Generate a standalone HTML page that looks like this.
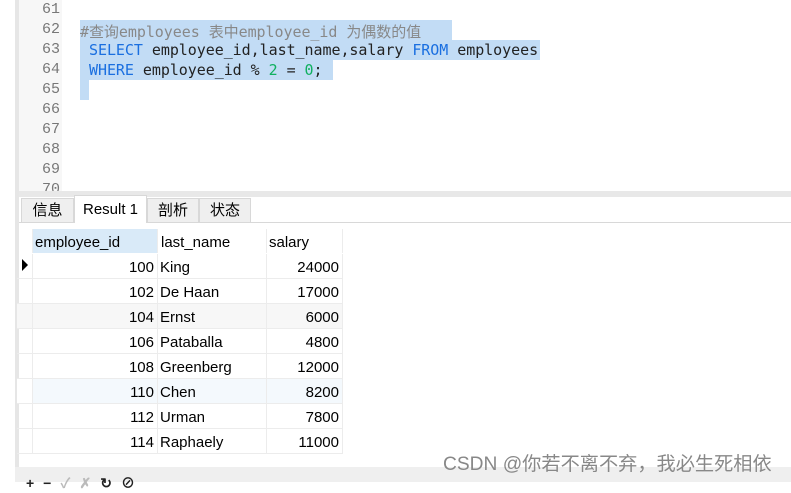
<!DOCTYPE html><html><head><meta charset="utf-8"><style>
body{margin:0;width:791px;height:482px;overflow:hidden;background:#fff;position:relative;font-family:"Liberation Sans","Noto Sans CJK SC",sans-serif}
.abs{position:absolute}
.ln{position:absolute;left:19px;width:43px;text-align:right;box-sizing:border-box;padding-right:2px;font:15px "Liberation Mono","Noto Sans CJK SC",monospace;color:#777}
.code{position:absolute;font:15px "DejaVu Sans Mono","Noto Sans CJK SC",monospace;color:#222;white-space:pre;letter-spacing:-0.05px}
.kw{color:#1a6fe0}.num{color:#10b060}.cm{color:#888}
.sel{position:absolute;background:#c2dcf5}
.tab{position:absolute;top:198px;height:24px;background:#efefef;border:1px solid #d8d8d8;border-bottom:none;font-size:15px;line-height:24px;text-align:center;box-sizing:border-box}
.row{position:absolute;left:17px;width:326px;height:25px;border-bottom:1px solid #ececec;box-sizing:border-box;font-size:15px;line-height:27px}
.row div{position:absolute;top:0;height:24px;border-right:1px solid #ececec;box-sizing:border-box}
</style></head><body>
<div class="abs" style="left:15px;top:0;width:4px;height:470px;background:#e6e6e6"></div>
<div class="abs" style="left:19px;top:0;width:43px;height:192px;background:#f7f7f7"></div>
<div class="sel" style="left:80px;top:20px;width:372px;height:20px"></div>
<div class="sel" style="left:80px;top:40px;width:460px;height:20px"></div>
<div class="sel" style="left:80px;top:60px;width:253px;height:20px"></div>
<div class="sel" style="left:80px;top:80px;width:9px;height:20px"></div>
<div class="ln" style="top:1px">61</div><div class="ln" style="top:21px">62</div><div class="ln" style="top:41px">63</div><div class="ln" style="top:61px">64</div><div class="ln" style="top:81px">65</div><div class="ln" style="top:101px">66</div><div class="ln" style="top:121px">67</div><div class="ln" style="top:141px">68</div><div class="ln" style="top:161px">69</div><div class="ln" style="top:181px;height:10px;overflow:hidden">70</div>
<div class="code cm" style="left:80px;top:21px">#查询employees 表中employee_id 为偶数的值</div>
<div class="code" style="left:80px;top:41px"> <span class="kw">SELECT</span> employee_id,last_name,salary <span class="kw">FROM</span> employees</div>
<div class="code" style="left:80px;top:61px"> <span class="kw">WHERE</span> employee_id % <span class="num">2</span> = <span class="num">0</span>;</div>
<div class="abs" style="left:19px;top:191px;width:772px;height:6px;background:#e8e8e8"></div>
<div class="abs" style="left:19px;top:222px;width:772px;height:1px;background:#d8d8d8"></div>
<div class="tab" style="left:21px;width:53px">信息</div>
<div class="tab" style="left:74px;top:195px;height:28px;width:73px;background:#fff;line-height:27px">Result 1</div>
<div class="tab" style="left:147px;width:52px">剖析</div>
<div class="tab" style="left:199px;width:52px">状态</div>
<div class="row" style="top:229px;border-bottom:none"><div style="left:0;width:16px"></div><div style="left:16px;width:125px;background:#d9eaf8;padding-left:2px">employee_id</div><div style="left:141px;width:109px;padding-left:3px">last_name</div><div style="left:250px;width:76px;padding-left:2px">salary</div></div>
<div class="abs" style="left:22px;top:259px;width:0;height:0;border-left:6px solid #000;border-top:6px solid transparent;border-bottom:6px solid transparent"></div>
<div class="row" style="top:254px"><div style="left:0;width:16px"></div><div style="left:16px;width:125px;text-align:right;padding-right:3px">100</div><div style="left:141px;width:109px;padding-left:2px">King</div><div style="left:250px;width:76px;text-align:right;padding-right:3px">24000</div></div>
<div class="row" style="top:279px"><div style="left:0;width:16px"></div><div style="left:16px;width:125px;text-align:right;padding-right:3px">102</div><div style="left:141px;width:109px;padding-left:2px">De Haan</div><div style="left:250px;width:76px;text-align:right;padding-right:3px">17000</div></div>
<div class="row" style="top:304px;background:#f7f7f7"><div style="left:0;width:16px"></div><div style="left:16px;width:125px;text-align:right;padding-right:3px">104</div><div style="left:141px;width:109px;padding-left:2px">Ernst</div><div style="left:250px;width:76px;text-align:right;padding-right:3px">6000</div></div>
<div class="row" style="top:329px"><div style="left:0;width:16px"></div><div style="left:16px;width:125px;text-align:right;padding-right:3px">106</div><div style="left:141px;width:109px;padding-left:2px">Pataballa</div><div style="left:250px;width:76px;text-align:right;padding-right:3px">4800</div></div>
<div class="row" style="top:354px"><div style="left:0;width:16px"></div><div style="left:16px;width:125px;text-align:right;padding-right:3px">108</div><div style="left:141px;width:109px;padding-left:2px">Greenberg</div><div style="left:250px;width:76px;text-align:right;padding-right:3px">12000</div></div>
<div class="row" style="top:379px;background:#f4f9fd"><div style="left:0;width:16px;background:#fff"></div><div style="left:16px;width:125px;text-align:right;padding-right:3px">110</div><div style="left:141px;width:109px;padding-left:2px">Chen</div><div style="left:250px;width:76px;text-align:right;padding-right:3px">8200</div></div>
<div class="row" style="top:404px"><div style="left:0;width:16px"></div><div style="left:16px;width:125px;text-align:right;padding-right:3px">112</div><div style="left:141px;width:109px;padding-left:2px">Urman</div><div style="left:250px;width:76px;text-align:right;padding-right:3px">7800</div></div>
<div class="row" style="top:429px"><div style="left:0;width:16px"></div><div style="left:16px;width:125px;text-align:right;padding-right:3px">114</div><div style="left:141px;width:109px;padding-left:2px">Raphaely</div><div style="left:250px;width:76px;text-align:right;padding-right:3px">11000</div></div>
<div class="abs" style="left:15px;top:467px;width:776px;height:15px;background:#efefef"></div>
<div class="abs" style="left:26px;top:473px;font-size:14px;font-weight:bold;color:#222;letter-spacing:9px">+−<span style="color:#bbb">✓✗</span>↻⊘</div>
<div class="abs" style="left:443px;top:449px;font-size:19px;color:#888;transform:scaleX(1.01);transform-origin:left">CSDN @你若不离不弃，我必生死相依</div>
</body></html>
